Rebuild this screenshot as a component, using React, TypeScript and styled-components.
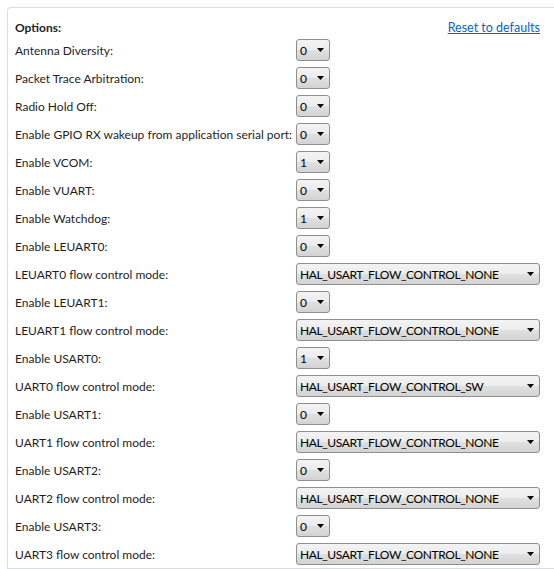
import React from 'react';
import styled, { createGlobalStyle } from 'styled-components';

interface OptionRow {
    label: string;
    value: string;
    wide?: boolean;
}

const rows: OptionRow[] = [
    { label: 'Antenna Diversity:', value: '0' },
    { label: 'Packet Trace Arbitration:', value: '0' },
    { label: 'Radio Hold Off:', value: '0' },
    { label: 'Enable GPIO RX wakeup from application serial port:', value: '0' },
    { label: 'Enable VCOM:', value: '1' },
    { label: 'Enable VUART:', value: '0' },
    { label: 'Enable Watchdog:', value: '1' },
    { label: 'Enable LEUART0:', value: '0' },
    { label: 'LEUART0 flow control mode:', value: 'HAL_USART_FLOW_CONTROL_NONE', wide: true },
    { label: 'Enable LEUART1:', value: '0' },
    { label: 'LEUART1 flow control mode:', value: 'HAL_USART_FLOW_CONTROL_NONE', wide: true },
    { label: 'Enable USART0:', value: '1' },
    { label: 'UART0 flow control mode:', value: 'HAL_USART_FLOW_CONTROL_SW', wide: true },
    { label: 'Enable USART1:', value: '0' },
    { label: 'UART1 flow control mode:', value: 'HAL_USART_FLOW_CONTROL_NONE', wide: true },
    { label: 'Enable USART2:', value: '0' },
    { label: 'UART2 flow control mode:', value: 'HAL_USART_FLOW_CONTROL_NONE', wide: true },
    { label: 'Enable USART3:', value: '0' },
    { label: 'UART3 flow control mode:', value: 'HAL_USART_FLOW_CONTROL_NONE', wide: true },
];

const GlobalStyle = createGlobalStyle`
    body {
        margin: 0;
        background: #ffffff;
        font-family: Lato, 'Noto Sans', sans-serif;
        overflow: hidden;
    }
`;

const Combo: React.FunctionComponent<{ value: string; wide?: boolean }> = ({ value, wide }) => (
    <ComboBox $wide={wide}>
        <ComboText>{value}</ComboText>
        <Arrow viewBox="0 0 7 4" width="7" height="4">
            <path d="M0 0 H7 L3.5 4 Z" fill="#000" />
        </Arrow>
    </ComboBox>
);

export default function App() {
    return (
        <>
            <GlobalStyle />
            <Page>
                <Panel>
                    <Header>
                        <Title>Options:</Title>
                        <ResetLink href="#">Reset to defaults</ResetLink>
                    </Header>
                    <Grid>
                        {rows.map(row => (
                            <React.Fragment key={row.label}>
                                <Label>{row.label}</Label>
                                <Cell>
                                    <Combo value={row.value} wide={row.wide} />
                                </Cell>
                            </React.Fragment>
                        ))}
                    </Grid>
                </Panel>
            </Page>
        </>
    );
}

const Page = styled.div`
    width: 554px;
    height: 569px;
    padding: 7px 0 0 7px;
    box-sizing: border-box;
    overflow: hidden;
`;

const Panel = styled.div`
    width: 600px;
    border: 1px solid #d7dde3;
    border-right: none;
    border-radius: 4px 0 0 0;
    padding: 10px 0 0 7px;
    box-sizing: border-box;
`;

const Header = styled.div`
    display: flex;
    justify-content: space-between;
    align-items: center;
    width: 525px;
    height: 18px;
`;

const Title = styled.span`
    font-size: 12px;
    font-weight: 700;
    color: #1e1e1e;
`;

const ResetLink = styled.a`
    font-size: 12.5px;
    color: #0066cc;
    text-decoration: underline;
`;

const Grid = styled.div`
    display: grid;
    grid-template-columns: 281px auto;
    grid-auto-rows: 28px;
    align-items: center;
`;

const Label = styled.span`
    font-size: 12px;
    color: #1e1e1e;
    white-space: nowrap;
`;

const Cell = styled.div`
    display: flex;
    align-items: center;
`;

const ComboBox = styled.div<{ $wide?: boolean }>`
    display: flex;
    align-items: center;
    justify-content: space-between;
    width: ${p => (p.$wide ? '244px' : '34px')};
    height: 22px;
    box-sizing: border-box;
    padding: 0 5px 0 3px;
    border: 1px solid #8e8f8f;
    border-radius: 3px;
    background: linear-gradient(#f3f3f3 0%, #ececec 50%, #e0e0e0 51%, #d3d3d3 100%);
`;

const ComboText = styled.span`
    font-size: 12px;
    letter-spacing: -0.4px;
    color: #000;
    white-space: nowrap;
`;

const Arrow = styled.svg`
    flex: none;
`;
